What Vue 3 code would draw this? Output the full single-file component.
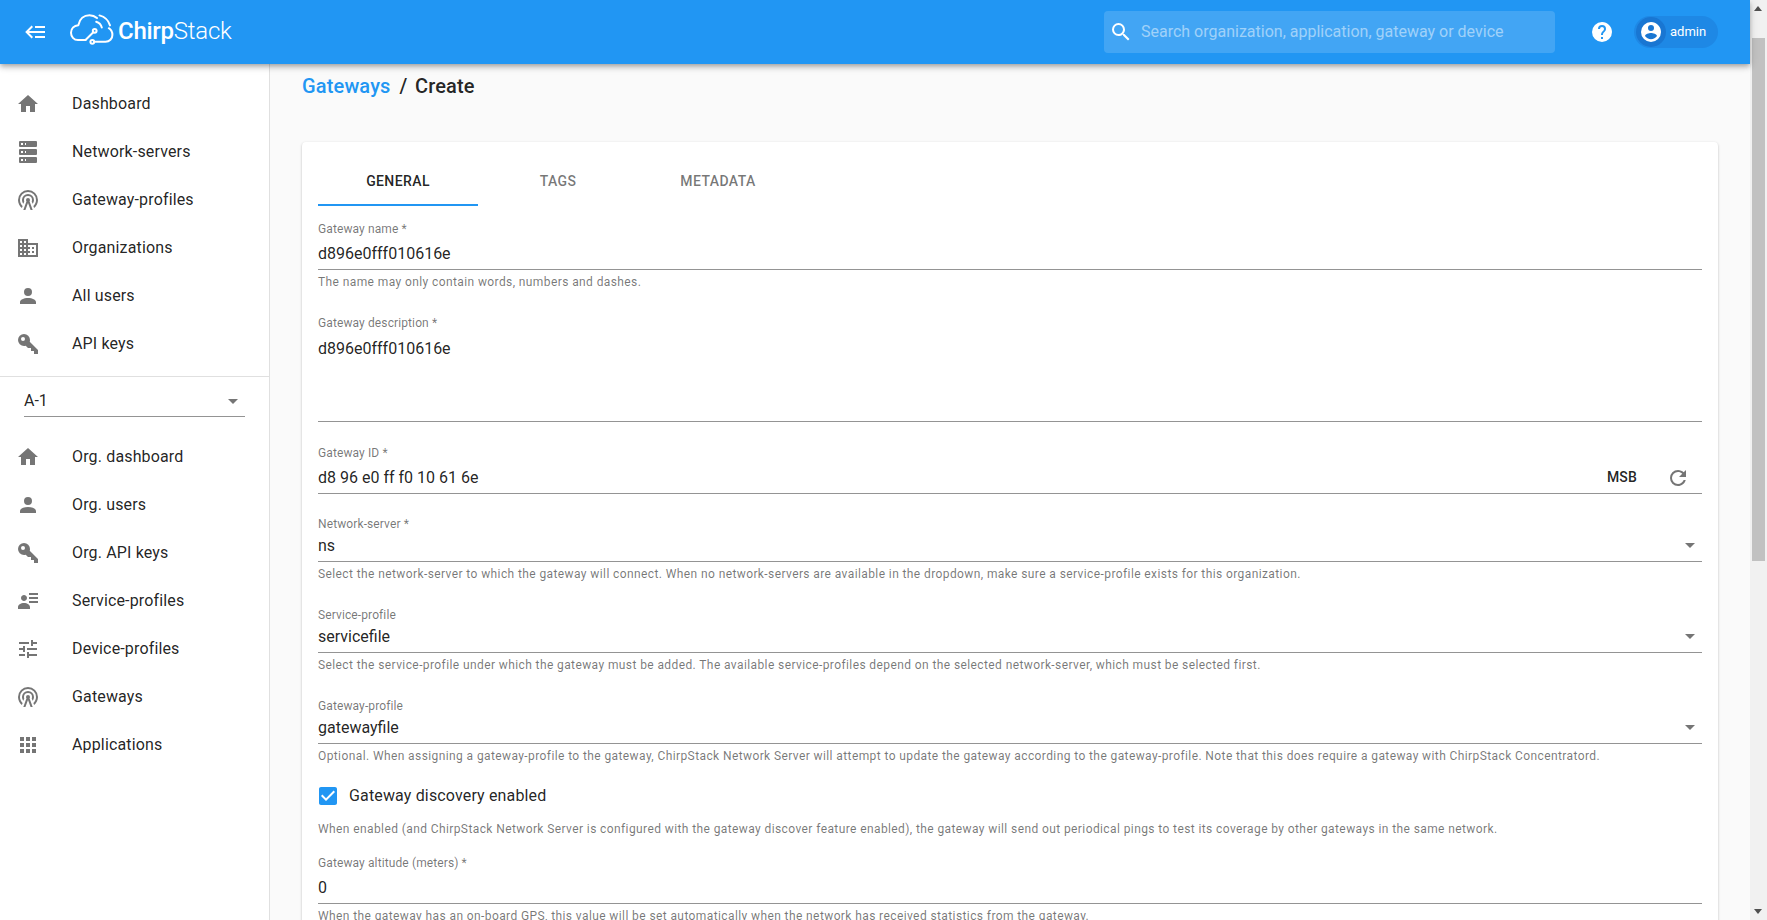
<script setup>
const P = {
  home: 'M10 20v-6h4v6h5v-8h3L12 3 2 12h3v8z',
  server: 'M4,1H20A1,1 0 0,1 21,2V6A1,1 0 0,1 20,7H4A1,1 0 0,1 3,6V2A1,1 0 0,1 4,1M4,9H20A1,1 0 0,1 21,10V14A1,1 0 0,1 20,15H4A1,1 0 0,1 3,14V10A1,1 0 0,1 4,9M4,17H20A1,1 0 0,1 21,18V22A1,1 0 0,1 20,23H4A1,1 0 0,1 3,22V18A1,1 0 0,1 4,17M9,5H10V3H9V5M9,13H10V11H9V13M9,21H10V19H9V21M5,3V5H7V3H5M5,11V13H7V11H5M5,19V21H7V19H5Z',
  tower: 'M12,10A2,2 0 0,1 14,12C14,12.5 13.82,12.94 13.53,13.29L16.7,22H14.57L12,14.93L9.43,22H7.3L10.47,13.29C10.18,12.94 10,12.5 10,12A2,2 0 0,1 12,10M12,8A4,4 0 0,0 8,12C8,12.5 8.1,13 8.28,13.46L7.4,15.86C6.53,14.81 6,13.47 6,12A6,6 0 0,1 12,6A6,6 0 0,1 18,12C18,13.47 17.47,14.81 16.6,15.86L15.72,13.46C15.9,13 16,12.5 16,12A4,4 0 0,0 12,8M12,4A8,8 0 0,0 4,12C4,14.36 5,16.5 6.64,17.94L5.92,19.94C3.54,18.11 2,15.23 2,12A10,10 0 0,1 12,2A10,10 0 0,1 22,12C22,15.23 20.46,18.11 18.08,19.94L17.36,17.94C19,16.5 20,14.36 20,12A8,8 0 0,0 12,4Z',
  domain: 'M12 7V3H2v18h20V7H12zM6 19H4v-2h2v2zm0-4H4v-2h2v2zm0-4H4V9h2v2zm0-4H4V5h2v2zm4 12H8v-2h2v2zm0-4H8v-2h2v2zm0-4H8V9h2v2zm0-4H8V5h2v2zm10 12h-8v-2h2v-2h-2v-2h2v-2h-2V9h8v10zm-2-8h-2v2h2v-2zm0 4h-2v2h2v-2z',
  account: 'M12,4A4,4 0 0,1 16,8A4,4 0 0,1 12,12A4,4 0 0,1 8,8A4,4 0 0,1 12,4M12,14C16.42,14 20,15.79 20,18V20H4V18C4,15.79 7.58,14 12,14Z',
  key: 'M22,18V22H18V19H15V16H12L9.74,13.74C9.19,13.91 8.61,14 8,14A6,6 0 0,1 2,8A6,6 0 0,1 8,2A6,6 0 0,1 14,8C14,8.61 13.91,9.19 13.74,9.74L22,18M7,5A2,2 0 0,0 5,7A2,2 0 0,0 7,9A2,2 0 0,0 9,7A2,2 0 0,0 7,5Z',
  details: 'M11,9C11,10.66 9.66,12 8,12C6.34,12 5,10.66 5,9C5,7.34 6.34,6 8,6C9.66,6 11,7.34 11,9M14,20H2V18C2,15.79 4.69,14 8,14C11.31,14 14,15.79 14,18M22,12V14H13V12M22,8V10H13V8M22,4V6H13V4Z',
  tune: 'M3,17V19H9V17H3M3,5V7H13V5H3M13,21V19H21V17H13V15H11V21H13M7,9V11H3V13H7V15H9V9H7M21,13V11H11V13H21M15,9H17V7H21V5H17V3H15V9Z',
  apps: 'M16,20H20V16H16M16,14H20V10H16M10,8H14V4H10M16,8H20V4H16M10,14H14V10H10M4,14H8V10H4M4,20H8V16H4M10,20H14V16H10M4,8H8V4H4V8Z',
  back: 'M5,13L9,17L7.6,18.42L1.18,12L7.6,5.58L9,7L5,11H21V13H5M21,6V8H11V6H21M21,16V18H11V16H21Z',
  search: 'M9.5,3A6.5,6.5 0 0,1 16,9.5C16,11.11 15.41,12.59 14.44,13.73L14.71,14H15.5L20.5,19L19,20.5L14,15.5V14.71L13.73,14.44C12.59,15.41 11.11,16 9.5,16A6.5,6.5 0 0,1 3,9.5A6.5,6.5 0 0,1 9.5,3M9.5,5C7,5 5,7 5,9.5C5,12 7,14 9.5,14C12,14 14,12 14,9.5C14,7 12,5 9.5,5Z',
  help: 'M15.07,11.25L14.17,12.17C13.45,12.89 13,13.5 13,15H11V14.5C11,13.39 11.45,12.39 12.17,11.67L13.41,10.41C13.78,10.05 14,9.55 14,9C14,7.89 13.1,7 12,7A2,2 0 0,0 10,9H8A4,4 0 0,1 12,5A4,4 0 0,1 16,9C16,9.88 15.64,10.67 15.07,11.25M13,19H11V17H13M12,2A10,10 0 0,0 2,12A10,10 0 0,0 12,22A10,10 0 0,0 22,12C22,6.47 17.5,2 12,2Z',
  circle: 'M12,19.2C9.5,19.2 7.29,17.92 6,16C6.03,14 10,12.9 12,12.9C14,12.9 17.97,14 18,16C16.71,17.92 14.5,19.2 12,19.2M12,5A3,3 0 0,1 15,8A3,3 0 0,1 12,11A3,3 0 0,1 9,8A3,3 0 0,1 12,5M12,2A10,10 0 0,0 2,12A10,10 0 0,0 12,22A10,10 0 0,0 22,12C22,6.47 17.5,2 12,2Z',
  refresh: 'M17.65,6.35C16.2,4.9 14.21,4 12,4A8,8 0 0,0 4,12A8,8 0 0,0 12,20C15.73,20 18.84,17.45 19.73,14H17.65C16.83,16.33 14.61,18 12,18A6,6 0 0,1 6,12A6,6 0 0,1 12,6C13.66,6 15.14,6.69 16.22,7.78L13,11H20V4L17.65,6.35Z',
  caret: 'M7 10l5 5 5-5z',
  check: 'M19 3H5c-1.11 0-2 .9-2 2v14c0 1.1.89 2 2 2h14c1.11 0 2-.9 2-2V5c0-1.1-.89-2-2-2zm-9 14l-5-5 1.41-1.41L10 14.17l7.59-7.59L19 8l-9 9z',
}
const globalNav = [
  ['Dashboard', P.home], ['Network-servers', P.server], ['Gateway-profiles', P.tower],
  ['Organizations', P.domain], ['All users', P.account], ['API keys', P.key],
]
const orgNav = [
  ['Org. dashboard', P.home], ['Org. users', P.account], ['Org. API keys', P.key],
  ['Service-profiles', P.details], ['Device-profiles', P.tune], ['Gateways', P.tower], ['Applications', P.apps],
]
const selects = [
  ['Network-server *', 'ns', 'Select the network-server to which the gateway will connect. When no network-servers are available in the dropdown, make sure a service-profile exists for this organization.'],
  ['Service-profile', 'servicefile', 'Select the service-profile under which the gateway must be added. The available service-profiles depend on the selected network-server, which must be selected first.'],
  ['Gateway-profile', 'gatewayfile', 'Optional. When assigning a gateway-profile to the gateway, ChirpStack Network Server will attempt to update the gateway according to the gateway-profile. Note that this does require a gateway with ChirpStack Concentratord.'],
]
</script>

<template>
  <div class="root">
    <div class="page">
      <header class="bar">
        <svg class="menu" viewBox="0 0 24 24"><path :d="P.back" /></svg>
        <div class="logo">
          <svg class="cloud" viewBox="0 0 44 34" fill="none" stroke="#fff" stroke-width="2" stroke-linecap="round" stroke-linejoin="round">
            <path d="M15.5 28H8C3.8 28 1 24.6 1 20.8C1 16.6 4.2 13.6 8.3 13.2C9.5 7 14 3.2 19.5 3.2C22.5 3.2 25 4.3 27 6.1" />
            <path d="M15.5 28L23.3 20.2" />
            <circle cx="24.7" cy="18.8" r="1.9" />
            <path d="M26.2 9.8C29 10.6 31 12.6 31.8 15.6" />
            <path d="M29.5 3.4C35 4.9 38.5 8.4 40 13.4" />
            <circle cx="22.3" cy="29.8" r="1.9" />
            <path d="M24.2 29.8H35.5C39.5 29.8 42.4 26.8 42.4 23C42.4 20 41 17.6 38.8 16.2" />
          </svg>
          <span class="logo-text"><b>Chirp</b>Stack</span>
        </div>
        <div class="search">
          <svg viewBox="0 0 24 24"><path :d="P.search" /></svg>
          <span>Search organization, application, gateway or device</span>
        </div>
        <svg class="help" viewBox="0 0 24 24"><path :d="P.help" /></svg>
        <div class="chip">
          <span class="avatar"><svg viewBox="0 0 24 24"><path :d="P.circle" /></svg></span>
          <span class="who">admin</span>
        </div>
      </header>

      <div class="body">
        <aside class="side">
          <ul class="nav first">
            <li v-for="n in globalNav" :key="n[0]">
              <svg viewBox="0 0 24 24"><path :d="n[1]" /></svg><span>{{ n[0] }}</span>
            </li>
          </ul>
          <div class="org">
            <div class="org-sel">
              <span>A-1</span>
              <svg viewBox="0 0 24 24"><path :d="P.caret" /></svg>
            </div>
          </div>
          <ul class="nav">
            <li v-for="n in orgNav" :key="n[0]">
              <svg viewBox="0 0 24 24"><path :d="n[1]" /></svg><span>{{ n[0] }}</span>
            </li>
          </ul>
        </aside>

        <main class="main">
          <div class="crumbs"><a>Gateways</a><i>/</i><span>Create</span></div>
          <section class="card">
            <div class="tabs">
              <div class="tab on">General</div>
              <div class="tab">Tags</div>
              <div class="tab">Metadata</div>
            </div>

            <div class="field">
              <label>Gateway name *</label>
              <div class="input">d896e0fff010616e</div>
              <p class="hint">The name may only contain words, numbers and dashes.</p>
            </div>

            <div class="field">
              <label>Gateway description *</label>
              <div class="input area">d896e0fff010616e</div>
            </div>

            <div class="field id">
              <label>Gateway ID *</label>
              <div class="input adorned">
                <span class="grow">d8 96 e0 ff f0 10 61 6e</span>
                <span class="msb">MSB</span>
                <span class="reload"><svg viewBox="0 0 24 24"><path :d="P.refresh" /></svg></span>
              </div>
            </div>

            <div v-for="s in selects" :key="s[0]" class="field sel">
              <label>{{ s[0] }}</label>
              <div class="input select">
                <span class="grow">{{ s[1] }}</span>
                <svg viewBox="0 0 24 24"><path :d="P.caret" /></svg>
              </div>
              <p class="hint">{{ s[2] }}</p>
            </div>

            <div class="checkrow">
              <svg viewBox="0 0 24 24"><path :d="P.check" /></svg>
              <span>Gateway discovery enabled</span>
            </div>
            <p class="hint">When enabled (and ChirpStack Network Server is configured with the gateway discover feature enabled), the gateway will send out periodical pings to test its coverage by other gateways in the same network.</p>

            <div class="field alt">
              <label>Gateway altitude (meters) *</label>
              <div class="input">0</div>
              <p class="hint">When the gateway has an on-board GPS, this value will be set automatically when the network has received statistics from the gateway.</p>
            </div>
          </section>
        </main>
      </div>
    </div>

    <div class="scroll">
      <span class="arrow up"></span>
      <span class="thumb"></span>
      <span class="arrow down"></span>
    </div>
  </div>
</template>

<style>
html, body { margin: 0; height: 100%; overflow: hidden; }
</style>

<style scoped>
.root {
  display: flex;
  height: 920px;
  overflow: hidden;
  font-family: Roboto, "Liberation Sans", sans-serif;
  color: rgba(0, 0, 0, 0.87);
  background: #fafafa;
}
.page { width: 1750px; display: flex; flex-direction: column; position: relative; }

.bar {
  height: 64px;
  flex: none;
  background: #2196f3;
  display: flex;
  align-items: center;
  color: #fff;
  position: relative;
  z-index: 2;
  box-shadow: 0 2px 4px -1px rgba(0,0,0,.2), 0 4px 5px 0 rgba(0,0,0,.14), 0 1px 10px 0 rgba(0,0,0,.12);
}
.bar svg { fill: #fff; }
.menu { width: 24px; height: 24px; margin-left: 24px; }
.logo { display: flex; align-items: center; margin-left: 22px; }
.cloud { width: 44px; height: 34px; margin-bottom: 6px; }
.bar svg.cloud { fill: none; }
.logo-text { font-size: 24px; font-weight: 300; margin-left: 4px; margin-bottom: 2px; letter-spacing: -0.25px; }
.logo-text b { font-weight: 500; }
.search {
  margin-left: auto;
  width: 451px;
  height: 42px;
  border-radius: 4px;
  background: rgba(255,255,255,.15);
  display: flex;
  align-items: center;
  font-size: 16px;
  color: rgba(255,255,255,.5);
}
.search span { margin-bottom: 2px; }
.search svg { width: 24px; height: 24px; margin-left: 5px; margin-right: 8px; }
.help { width: 24px; height: 24px; margin-left: 35px; }
.chip {
  width: 84px;
  height: 32px;
  margin-left: 20px;
  margin-right: 32px;
  border-radius: 16px;
  background: #1e88e5;
  display: flex;
  align-items: center;
  font-size: 13px;
}
.who { margin-bottom: 2px; }
.avatar {
  width: 30px;
  height: 30px;
  border-radius: 50%;
  background: #1976d2;
  display: flex;
  align-items: center;
  justify-content: center;
  margin-left: 2px;
  margin-right: 4px;
}
.avatar svg { width: 24px; height: 24px; }

.body { flex: 1; min-height: 0; display: flex; }
.side {
  width: 270px;
  flex: none;
  box-sizing: border-box;
  background: #fff;
  border-right: 1px solid rgba(0,0,0,.12);
  padding-top: 7px;
}
.nav { list-style: none; margin: 0; padding: 8px 0 0; }
.nav.first { padding-bottom: 9px; border-bottom: 1px solid rgba(0,0,0,.12); }
.nav li { height: 48px; display: flex; align-items: center; font-size: 16px; letter-spacing: 0.15px; padding-left: 16px; }
.nav svg { width: 24px; height: 24px; fill: rgba(0,0,0,.54); margin: 2px 32px 0 0; }
.org { padding: 8px 24px 0; height: 47px; box-sizing: border-box; }
.org-sel {
  height: 32px;
  display: flex;
  align-items: center;
  justify-content: space-between;
  font-size: 16px;
  border-bottom: 1px solid rgba(0,0,0,.42);
  width: 221px;
  box-sizing: border-box;
}
.org-sel svg { width: 24px; height: 24px; fill: rgba(0,0,0,.54); }

.main { flex: 1; min-width: 0; padding: 0 32px; overflow: hidden; }
.crumbs {
  height: 78px;
  display: flex;
  align-items: flex-start;
  font-size: 20px;
  font-weight: 500;
  line-height: 44px;
  letter-spacing: 0.15px;
}
.crumbs a { color: #2196f3; }
.crumbs i { font-style: normal; margin: 0 7.5px 0 9px; }
.card {
  background: #fff;
  border-radius: 4px;
  padding: 16px;
  box-shadow: 0 1px 3px 0 rgba(0,0,0,.2), 0 1px 1px 0 rgba(0,0,0,.14), 0 2px 1px -1px rgba(0,0,0,.12);
  height: 900px;
  box-sizing: border-box;
}
.tabs { display: flex; height: 48px; }
.tab {
  width: 160px;
  box-sizing: border-box;
  text-align: center;
  font-size: 14px;
  font-weight: 500;
  line-height: 46px;
  letter-spacing: 0.4px;
  text-transform: uppercase;
  color: rgba(0,0,0,.54);
}
.tab.on { color: rgba(0,0,0,.87); border-bottom: 2px solid #2196f3; }

.field { margin-top: 25px; }
.tabs + .field { margin-top: 16px; }
.field.id { margin-top: 24px; }
.field.id + .sel { margin-top: 23px; }
.field.alt { margin-top: 18px; }
.field label {
  display: block;
  font-size: 12px;
  line-height: 14px;
  height: 16px;
  letter-spacing: 0.11px;
  color: rgba(0,0,0,.54);
}
.input {
  height: 32px;
  box-sizing: border-box;
  padding-top: 6px;
  font-size: 16px;
  line-height: 19px;
  border-bottom: 1px solid rgba(0,0,0,.42);
}
.input.area { height: 90px; padding-top: 7px; }
.adorned, .select { display: flex; align-items: flex-start; }
.grow { flex: 1; }
.msb {
  width: 64px;
  text-align: center;
  font-size: 14px;
  font-weight: 500;
  letter-spacing: 0.2px;
}
.reload { width: 48px; height: 19px; display: flex; align-items: center; justify-content: center; }
.reload svg { width: 24px; height: 24px; flex: none; fill: rgba(0,0,0,.54); }
.select { height: 29px; padding-top: 3px; }
.select svg { width: 24px; height: 24px; margin-top: -3px; fill: rgba(0,0,0,.54); }
.hint {
  margin: 3px 0 0;
  font-size: 12px;
  line-height: 18px;
  height: 18px;
  letter-spacing: 0.4px;
  color: rgba(0,0,0,.54);
  white-space: nowrap;
}
.checkrow {
  display: flex;
  align-items: center;
  height: 42px;
  margin-top: 10px;
  font-size: 16px;
  letter-spacing: 0.15px;
}
.checkrow span { margin-bottom: 2px; }
.checkrow svg { width: 24px; height: 24px; fill: #2196f3; margin: 0 9px 0 -2px; }

.scroll { width: 17px; flex: none; background: #f1f1f1; position: relative; }
.thumb { position: absolute; left: 2px; width: 13px; top: 38px; height: 523px; background: #c1c1c1; }
.arrow { position: absolute; left: 4px; width: 0; height: 0; border-left: 4px solid transparent; border-right: 4px solid transparent; }
.up { top: 6px; border-bottom: 5px solid #505050; }
.down { bottom: 6px; border-top: 5px solid #505050; }
</style>
